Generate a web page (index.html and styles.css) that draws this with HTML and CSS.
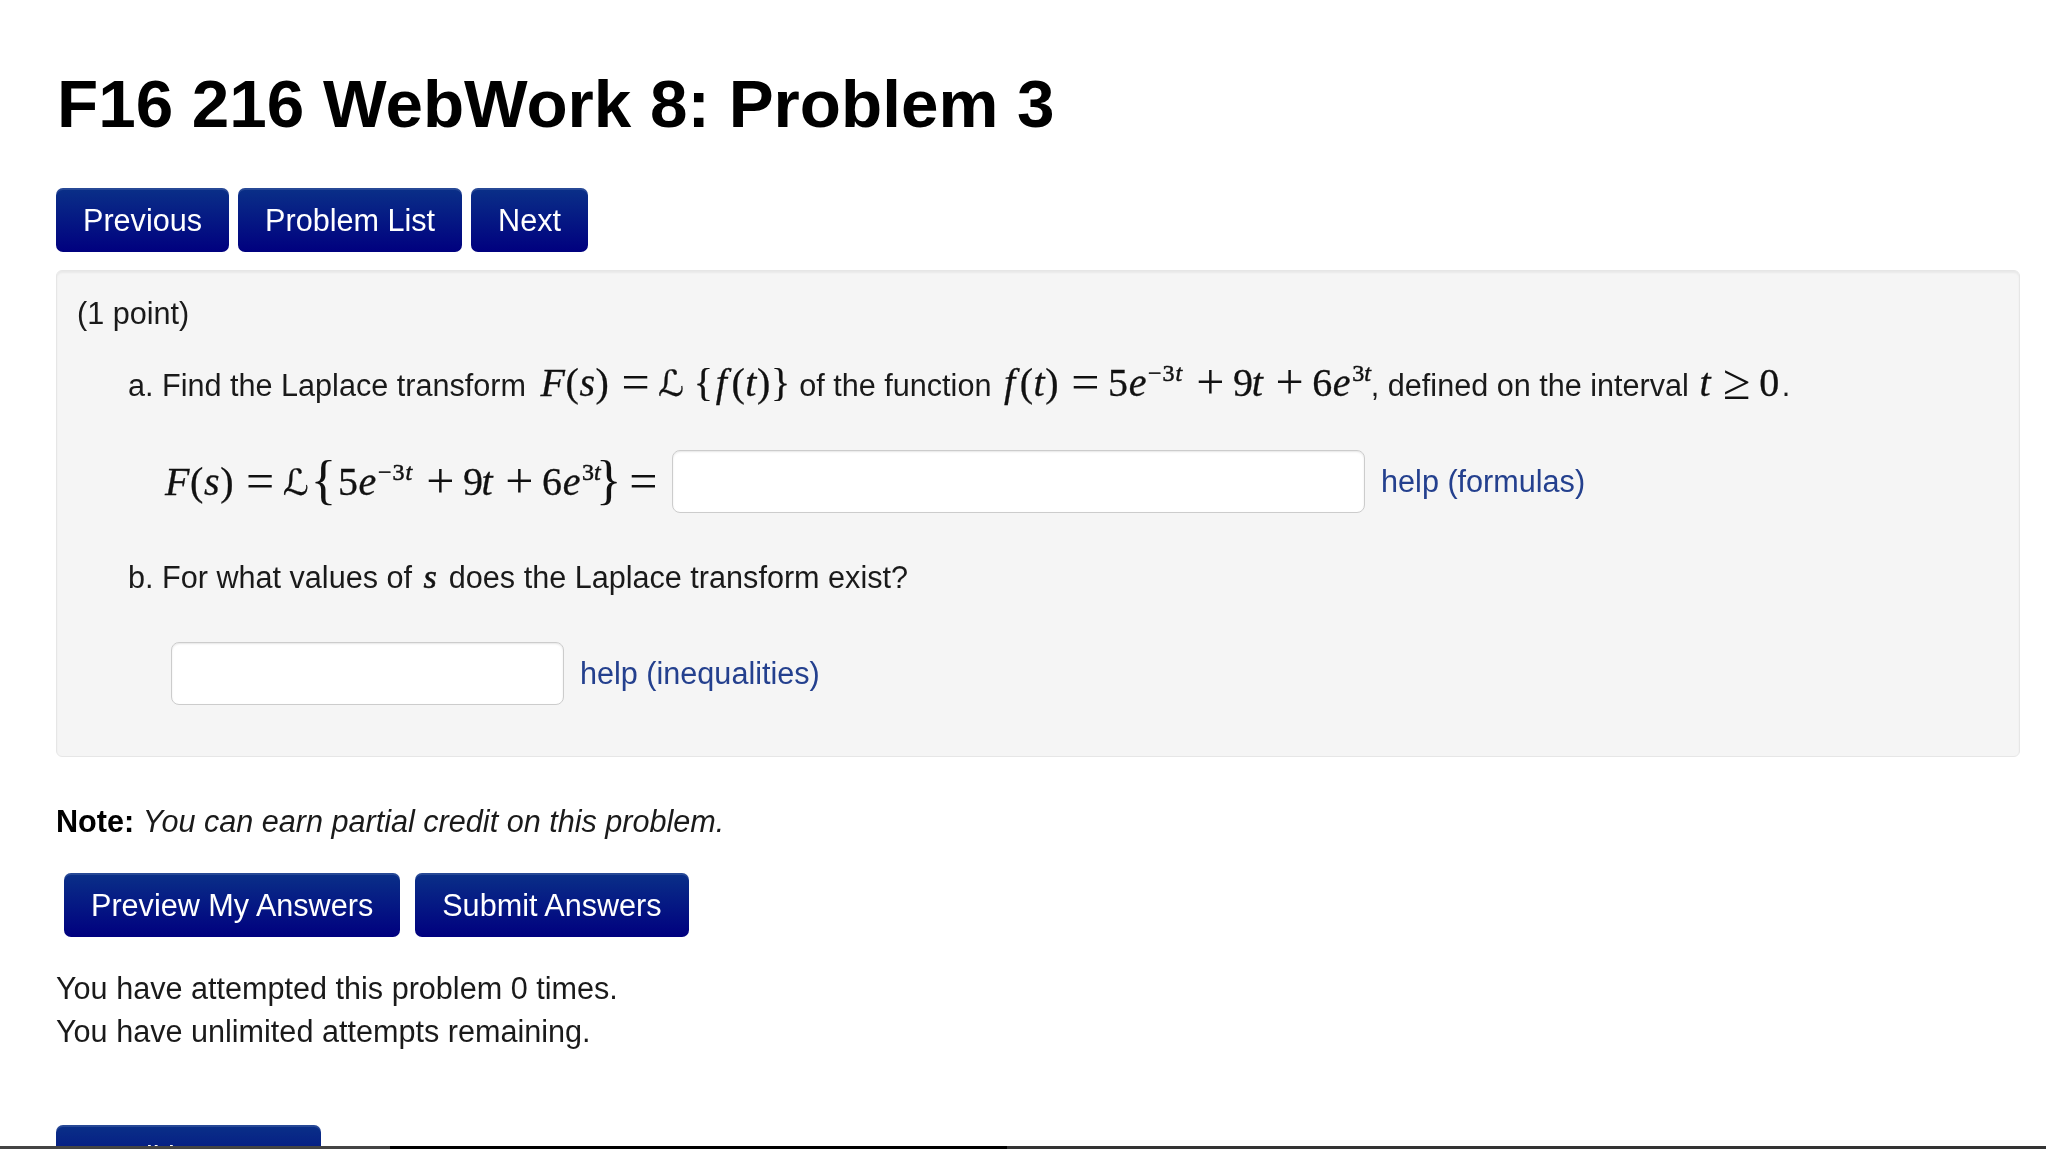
FILE: index.html
```html
<!DOCTYPE html>
<html lang="en">
<head>
<meta charset="utf-8">
<title>F16 216 WebWork 8: Problem 3</title>
<link rel="stylesheet" href="styles.css">
</head>
<body>
<main class="page">
  <h1 class="title">F16 216 WebWork 8: Problem 3</h1>
  <nav class="nav">
    <a class="btn">Previous</a>
    <a class="btn">Problem List</a>
    <a class="btn">Next</a>
  </nav>
  <section class="panel">
    <p class="points">(1 point)</p>
    <p class="item">a. Find the Laplace transform <span class="m m1"><i>F</i>(<i>s</i>)<span class="rel">=</span><span class="scr">ℒ</span><span class="br br-open">{</span><i class="fn">f</i>(<i>t</i>)<span class="br">}</span></span> of the function <span class="m m2"><i class="fn">f</i>(<i>t</i>)<span class="rel">=</span>5<i>e</i><sup>−3<i>t</i></sup><span class="op">+</span>9<i class="tc">t</i><span class="op">+</span>6<i>e</i><sup class="sup-end">3<i>t</i></sup></span>, defined on the interval <span class="m m3"><i>t</i><span class="rel">≥</span>0</span>.</p>
    <div class="answer answer-a">
      <span class="m m-eq"><i>F</i>(<i>s</i>)<span class="rel">=</span><span class="scr">ℒ</span><span class="bigbr">{</span>5<i>e</i><sup>−3<i>t</i></sup><span class="op">+</span>9<i class="tc">t</i><span class="op">+</span>6<i>e</i><sup class="sup-end">3<i>t</i></sup><span class="bigbr bigbr-close">}</span><span class="rel">=</span></span>
      <span class="field field-wide"></span>
      <a class="help">help (formulas)</a>
    </div>
    <p class="item item-b">b. For what values of <span class="m m-s"><i>s</i></span> does the Laplace transform exist?</p>
    <div class="answer answer-b">
      <span class="field field-short"></span>
      <a class="help">help (inequalities)</a>
    </div>
  </section>
  <p class="note"><b>Note:</b> <em>You can earn partial credit on this problem.</em></p>
  <div class="actions">
    <a class="btn">Preview My Answers</a>
    <a class="btn">Submit Answers</a>
  </div>
  <p class="status">You have attempted this problem 0 times.<br>You have unlimited attempts remaining.</p>
  <a class="btn btn-email">Email instructor</a>
</main>
<footer class="edge">
  <span class="seg seg-a"></span><span class="seg seg-b"></span><span class="seg seg-c"></span>
</footer>
</body>
</html>
```
FILE: styles.css
```css
* { box-sizing: border-box; }
html, body { margin: 0; height: 100%; }
body {
  display: flex;
  flex-direction: column;
  height: 100vh;
  overflow: hidden;
  background: #fff;
  color: #1a1a1a;
  font: 30.6px/43px "Liberation Sans", Arial, sans-serif;
}
.page { flex: 1; min-height: 0; overflow: hidden; padding: 64px 26px 0 56px; filter: blur(.4px); }
.title { margin: 0 0 44px 1px; font-size: 67.4px; line-height: 80px; font-weight: 700; color: #000; }
.nav { display: flex; gap: 9px; }
.btn {
  display: inline-block;
  height: 64px;
  padding: 0 27px;
  border-radius: 7px;
  line-height: 64px;
  color: #fff;
  white-space: nowrap;
  background: linear-gradient(#0a3088, #00007f);
  box-shadow: inset 0 2px 0 rgba(255,255,255,.12);
}
.panel {
  margin-top: 18px;
  height: 487px;
  padding: 21px 20px 0;
  background: #f5f5f5;
  border: 1px solid #e6e6e6;
  border-radius: 6px;
  box-shadow: inset 0 2px 2px rgba(0,0,0,.05);
}
.points { margin: 0 0 29px; }
.item { margin: 0 0 0 51px; white-space: nowrap; }
.item-b { margin-top: 43px; }
.answer { display: flex; align-items: center; height: 63px; }
.answer-a { margin: 43px 0 0 86px; }
.answer-b { margin: 43px 0 0 94px; }
.field {
  display: block;
  flex: none;
  height: 63px;
  background: #fff;
  border: 1px solid #ccc;
  border-radius: 8px;
  box-shadow: inset 0 1px 2px rgba(0,0,0,.1);
}
.field-wide { width: 693px; margin-left: 4px; }
.field-short { width: 393px; }
.help { margin-left: 16px; color: #24408e; }
.note { margin: 43px 0 0; color: #1a1a1a; }
.note b { color: #000; }
.actions { display: flex; gap: 15px; margin: 30px 0 0 8px; }
.status { margin: 30px 0 72px; }
.btn-email { display: block; width: 265px; height: 64px; }

.m { font-family: "Liberation Serif", "DejaVu Serif", serif; font-size: 40px; line-height: 0; color: #111; white-space: nowrap; letter-spacing: .6px; -webkit-text-stroke: .3px #111; margin: 0 2px; }
.m1 { margin: 0 0 0 6px; }
.m2 { margin-right: 0; }
.m-eq { margin-bottom: 8px; }
.m-s { font-size: 34px; margin: 0 3px; -webkit-text-stroke: .6px #111; }
.m sup { font-size: 24px; line-height: 0; vertical-align: 15px; font-weight: 400; margin: 0 1px; letter-spacing: 1px; -webkit-text-stroke: .5px #111; }
.m sup.sup-end { letter-spacing: 0; margin-right: 0; }
.m .op, .m .rel { font-size: 50px; line-height: 0; vertical-align: -3px; -webkit-text-stroke: 0; }
.m .op { margin: 0 8px 0 12px; }
.m .rel { margin: 0 8px 0 12px; }
.fn { margin: 0 4px 0 2px; }
.tc { margin-left: -2px; }
.scr { font-family: "DejaVu Sans", serif; font-style: italic; font-size: 36px; }
.br { margin: 0; }
.br-open { margin-left: 9px; }
.bigbr { font-size: 54px; line-height: 0; vertical-align: -3px; margin: 0 1px; -webkit-text-stroke: 0; }
.bigbr-close { margin: 0 -5px; }

.edge { flex: none; display: flex; height: 3px; }
.seg { display: block; height: 100%; }
.seg-a { width: 390px; background: #444; }
.seg-b { width: 617px; background: #000; }
.seg-c { flex: 1; background: #333; }
```
